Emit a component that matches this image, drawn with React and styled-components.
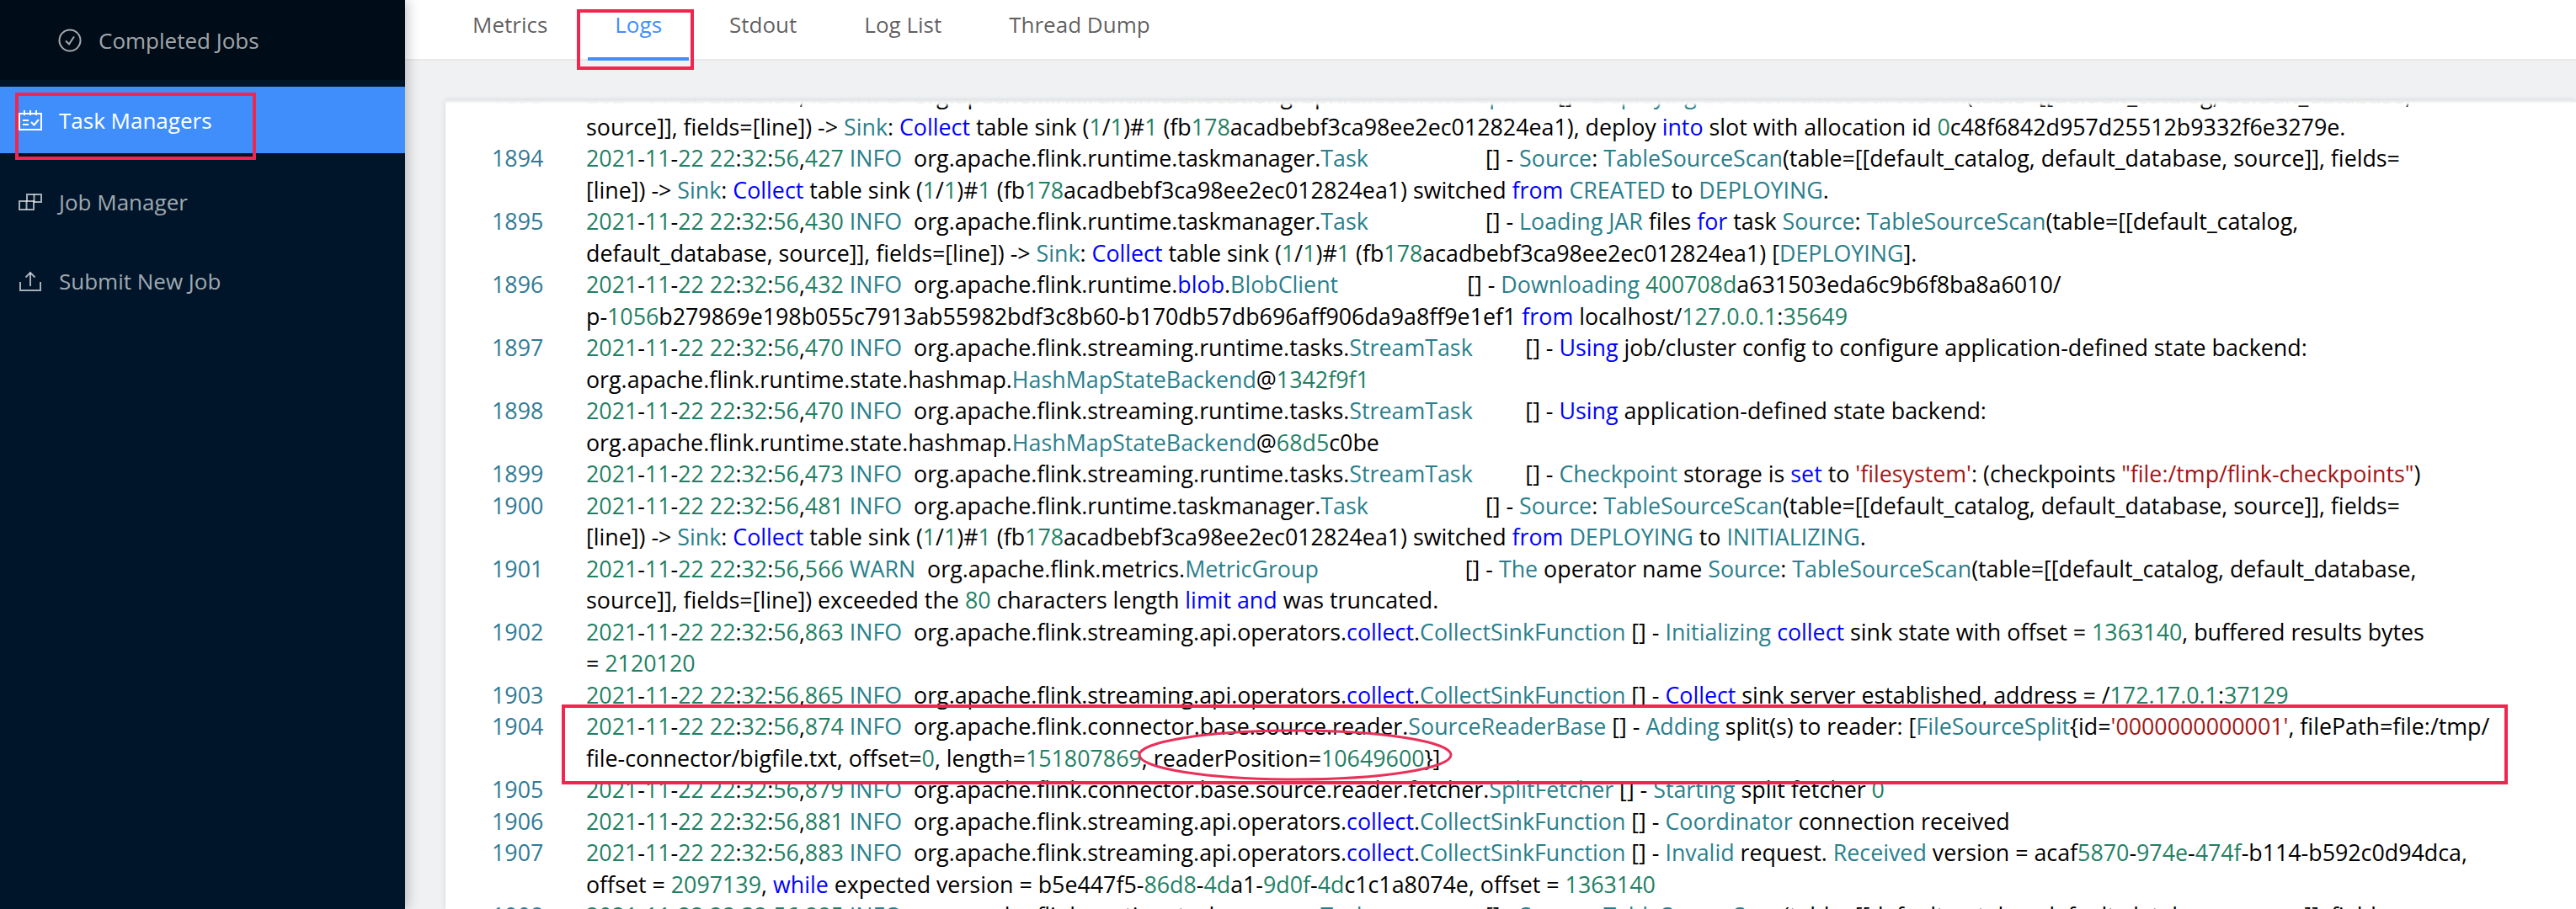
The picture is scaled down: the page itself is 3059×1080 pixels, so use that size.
import React from 'react';
import styled, {createGlobalStyle} from 'styled-components';

const GlobalStyle = createGlobalStyle`
    html, body {
        margin: 0;
        padding: 0;
        height: 100%;
        overflow: hidden;
        background: #f0f1f2;
    }
`;

const Page = styled.div`
    display: flex;
    width: 3059px;
    height: 1080px;
    overflow: hidden;
    font-family: "Open Sans", "Noto Sans", sans-serif;
`;

const Sider = styled.aside`
    flex: 0 0 481px;
    background: #001529;
    position: relative;
    z-index: 2;
    box-shadow: 2px 0 14px rgba(29, 35, 41, 0.3);
`;

const SubMenu = styled.div`
    height: 95px;
    padding: 1px 0 0 69px;
    box-sizing: border-box;
    background: #000c17;
`;

const SiderNav = styled.div`
    padding-top: 8px;
    display: flex;
    flex-direction: column;
    gap: 15px;
`;

const MenuItem = styled.div`
    height: ${(p) => (p.$sub ? '94px' : '79px')};
    margin-bottom: ${(p) => (p.$active ? '3px' : '0')};
    padding-left: ${(p) => (p.$sub ? '0' : '22px')};
    display: flex;
    align-items: center;
    gap: 20px;
    font-size: 26px;
    color: ${(p) => (p.$active ? '#fff' : 'rgba(255, 255, 255, 0.65)')};
    background: ${(p) => (p.$active ? '#3f8efc' : 'transparent')};
`;

const Main = styled.main`
    flex: 1;
    min-width: 0;
    display: flex;
    flex-direction: column;
`;

const TabBar = styled.nav`
    height: 72px;
    flex: none;
    padding-left: 48px;
    box-sizing: border-box;
    background: #fff;
    border-bottom: 2px solid #e8e8e8;
    display: flex;
    gap: 16px;
`;

const Tab = styled.div`
    height: 72px;
    box-sizing: border-box;
    padding: 10px 32px 0;
    font-size: 26px;
    line-height: 38px;
    color: ${(p) => (p.$active ? '#3f8efc' : 'rgba(0, 0, 0, 0.65)')};
    border-bottom: 4px solid ${(p) => (p.$active ? '#3f8efc' : 'transparent')};
`;

const Content = styled.section`
    flex: 1;
    min-height: 0;
    padding: 47px 0 0 48px;
`;

const LogPane = styled.div`
    position: relative;
    height: 100%;
    background: #fff;
    overflow: hidden;
    box-shadow: 0 0 6px rgba(0, 0, 0, 0.12);

    &::before {
        content: '';
        position: absolute;
        left: 0;
        right: 0;
        top: 0;
        height: 8px;
        z-index: 1;
        background: linear-gradient(#e6e6e6, rgba(255, 255, 255, 0.95) 50%, rgba(255, 255, 255, 0));
    }
`;

const Lines = styled.div`
    margin-top: -25px;
    font-size: 26.8px;
    color: #000;
    white-space: pre;
`;

const Line = styled.div`
    display: flex;
    height: 37.5px;
    line-height: 37.5px;
`;

const Gutter = styled.span`
    flex: 0 0 167px;
    padding-left: 55px;
    box-sizing: border-box;
    color: #2f7a96;
`;

const Number = styled.span`color: #1f8063;`;
const Type = styled.span`color: #2a7f8c;`;
const Keyword = styled.span`color: #0000ff;`;
const Str = styled.span`color: #a31515;`;

const Mark = styled.div`
    position: absolute;
    box-sizing: border-box;
    border: 4px solid #f0264f;
    z-index: 3;
`;

const SiderMark = styled(Mark)`
    left: 18px;
    top: 110px;
    width: 286px;
    height: 80px;
`;

const TabMark = styled(Mark)`
    left: 685px;
    top: 11px;
    width: 139px;
    height: 72px;
`;

const RowMark = styled(Mark)`
    left: 667px;
    top: 837px;
    width: 2311px;
    height: 95px;
`;

const RingMark = styled.svg`
    position: absolute;
    left: 1350px;
    top: 865px;
    z-index: 3;
`;

const CheckCircle = () => (
    <svg width="28" height="28" viewBox="0 0 28 28" fill="none" stroke="currentColor" strokeWidth="2">
        <circle cx="14" cy="14" r="12.5"/>
        <path d="M9 14.5l4 4 6-9"/>
    </svg>
);

const ScheduleIcon = () => (
    <svg width="28" height="24" viewBox="0 0 28 24" fill="none" stroke="currentColor" strokeWidth="2">
        <path d="M1 4h26v19H1z"/>
        <path d="M7 0v6M14 0v6M21 0v6"/>
        <path d="M5 12h7M5 17h7"/>
        <path d="M15 14l3.5 3.5L24 11"/>
    </svg>
);

const ClusterIcon = () => (
    <svg width="28" height="20" viewBox="0 0 28 20" fill="none" stroke="currentColor" strokeWidth="2">
        <path d="M1 9h17v10H1z"/>
        <path d="M9.500 9v10"/>
        <path d="M10 9V1h17v9h-9"/>
        <path d="M18.500 1v9"/>
    </svg>
);

const UploadIcon = () => (
    <svg width="28" height="24" viewBox="0 0 28 24" fill="none" stroke="currentColor" strokeWidth="2">
        <path d="M2 13v10h24V13"/>
        <path d="M14 18V2"/>
        <path d="M8.500 7.500L14 2l5.500 5.500"/>
    </svg>
);

const pad = (count) => ' '.repeat(count);

const date = (ms) => `{n|2021}-{n|11}-{n|22} {n|22}:{n|32}:{n|56},{n|${ms}}`;
const info = (ms) => `${date(ms)} {t|INFO}  `;
const jobId = '(fb{n|178}acadbebf3ca98ee2ec012824ea1)';
const sink = `{t|Sink}: {k|Collect} table sink ({n|1}/{n|1})#{n|1} ${jobId}`;
const scan = '{t|Source}: {t|TableSourceScan}(table=[[default_catalog, default_database, source]], fields=';
const collect = 'org.apache.flink.streaming.api.operators.{k|collect}.{t|CollectSinkFunction} [] - ';
const taskClass = `org.apache.flink.runtime.taskmanager.{t|Task}${pad(20)}[] - `;
const streamTask = `org.apache.flink.streaming.runtime.tasks.{t|StreamTask}${pad(9)}[] - `;

const rows = [
    ['1893', `${info('426')}org.apache.flink.runtime.executiongraph.{t|ExecutionGraph}${pad(7)}[] - {t|Deploying} {t|Source}: {t|TableSourceScan}(table=[[default_catalog, default_database,`],
    ['', `source]], fields=[line]) -> ${sink}, deploy {k|into} slot with allocation id {n|0}c48f6842d957d25512b9332f6e3279e.`],
    ['1894', `${info('427')}${taskClass}${scan}`],
    ['', `[line]) -> ${sink} switched {k|from} {t|CREATED} to {t|DEPLOYING}.`],
    ['1895', `${info('430')}${taskClass}{t|Loading} {t|JAR} files {k|for} task {t|Source}: {t|TableSourceScan}(table=[[default_catalog,`],
    ['', `default_database, source]], fields=[line]) -> ${sink} [{t|DEPLOYING}].`],
    ['1896', `${info('432')}org.apache.flink.runtime.{k|blob}.{t|BlobClient}${pad(22)}[] - {t|Downloading} {n|400708d}a631503eda6c9b6f8ba8a6010/`],
    ['', 'p-{n|1056}b279869e198b055c7913ab55982bdf3c8b60-b170db57db696aff906da9a8ff9e1ef1 {k|from} localhost/{n|127.0.0.1}:{n|35649}'],
    ['1897', `${info('470')}${streamTask}{k|Using} job/cluster config to configure application-defined state backend:`],
    ['', 'org.apache.flink.runtime.state.hashmap.{t|HashMapStateBackend}@{n|1342f9f1}'],
    ['1898', `${info('470')}${streamTask}{k|Using} application-defined state backend:`],
    ['', 'org.apache.flink.runtime.state.hashmap.{t|HashMapStateBackend}@{n|68d5}c0be'],
    ['1899', `${info('473')}${streamTask}{t|Checkpoint} storage is {k|set} to {s|'filesystem'}: (checkpoints {s|"file:/tmp/flink-checkpoints"})`],
    ['1900', `${info('481')}${taskClass}${scan}`],
    ['', `[line]) -> ${sink} switched {k|from} {t|DEPLOYING} to {t|INITIALIZING}.`],
    ['1901', `${date('566')} {t|WARN}  org.apache.flink.metrics.{t|MetricGroup}${pad(25)}[] - {t|The} operator name {t|Source}: {t|TableSourceScan}(table=[[default_catalog, default_database,`],
    ['', 'source]], fields=[line]) exceeded the {n|80} characters length {k|limit} {k|and} was truncated.'],
    ['1902', `${info('863')}${collect}{t|Initializing} {k|collect} sink state with offset = {n|1363140}, buffered results bytes`],
    ['', '= {n|2120120}'],
    ['1903', `${info('865')}${collect}{k|Collect} sink server established, address = /{n|172.17.0.1}:{n|37129}`],
    ['1904', `${info('874')}org.apache.flink.connector.base.source.reader.{t|SourceReaderBase} [] - {t|Adding} split(s) to reader: [{t|FileSourceSplit}{id={s|'0000000000001'}, filePath=file:/tmp/`],
    ['', 'file-connector/bigfile.txt, offset={n|0}, length={n|151807869}, readerPosition={n|10649600}}]'],
    ['1905', `${info('879')}org.apache.flink.connector.base.source.reader.fetcher.{t|SplitFetcher} [] - {t|Starting} split fetcher {n|0}`],
    ['1906', `${info('881')}${collect}{t|Coordinator} connection received`],
    ['1907', `${info('883')}${collect}{t|Invalid} request. {t|Received} version = acaf{n|5870}-{n|974e}-{n|474f}-b114-b592c0d94dca,`],
    ['', 'offset = {n|2097139}, {k|while} expected version = b5e447f5-{n|86d8}-{n|4d}a1-{n|9d0f}-{n|4d}c1c1a8074e, offset = {n|1363140}'],
    ['1908', `${info('885')}${taskClass}${scan}`],
];

const tokenTags = {n: Number, t: Type, k: Keyword, s: Str};

// turns "{n|123} foo" into coloured spans, same idea as the editor tokens
const renderTokens = (text) => {
    const parts = text.split(/(\{[ntks]\|[^}]*\})/);
    return parts.map((part, i) => {
        const match = part.match(/^\{([ntks])\|([^}]*)\}$/);
        if (!match) return part;
        const Tag = tokenTags[match[1]];
        return <Tag key={i}>{match[2]}</Tag>;
    });
};

const tabs = ['Metrics', 'Logs', 'Stdout', 'Log List', 'Thread Dump'];

const App = () => {
    return (
        <Page>
            <GlobalStyle/>
            <Sider>
                <SubMenu>
                    <MenuItem $sub><CheckCircle/>Completed Jobs</MenuItem>
                </SubMenu>
                <SiderNav>
                    <MenuItem $active><ScheduleIcon/>Task Managers</MenuItem>
                    <MenuItem><ClusterIcon/>Job Manager</MenuItem>
                    <MenuItem><UploadIcon/>Submit New Job</MenuItem>
                </SiderNav>
            </Sider>
            <Main>
                <TabBar>
                    {tabs.map((tab) => (
                        <Tab key={tab} $active={tab === 'Logs'}>{tab}</Tab>
                    ))}
                </TabBar>
                <Content>
                    <LogPane>
                        <Lines>
                            {rows.map(([num, text], i) => (
                                <Line key={i}>
                                    <Gutter>{num}</Gutter>
                                    <span>{renderTokens(text)}</span>
                                </Line>
                            ))}
                        </Lines>
                    </LogPane>
                </Content>
            </Main>
            <SiderMark/>
            <TabMark/>
            <RowMark/>
            <RingMark width="380" height="64" viewBox="0 0 380 64" fill="none">
                <ellipse cx="188" cy="32" rx="185" ry="29" stroke="#e8315a" strokeWidth="3"/>
            </RingMark>
        </Page>
    );
};

export default App;
